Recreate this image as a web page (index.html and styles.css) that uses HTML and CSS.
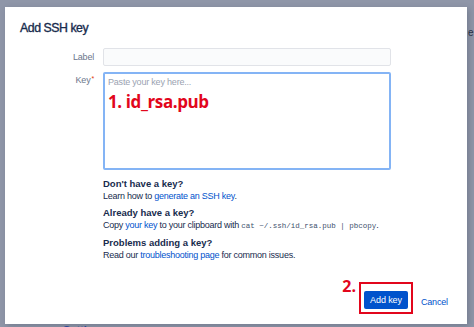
FILE: index.html
```html
<!DOCTYPE html>
<html lang="en">
  <head>
    <meta charset="UTF-8" />
    <title>Add SSH key</title>
    <link rel="stylesheet" href="styles.css">
  </head>
  <body>
    <div class="backdrop">
      <div class="modal">
        <h1>Add SSH key</h1>
        <form class="fields">
          <label class="lbl" for="label">Label</label>
          <input id="label" class="text" type="text" />
          <label class="lbl lbl-top" for="key">Key<span class="req">*</span></label>
          <div class="keybox">
            <span class="placeholder">Paste your key here...</span>
            <span class="note note-big">1. id_rsa.pub</span>
          </div>
        </form>
        <div class="help">
          <div class="group">
            <p class="q">Don't have a key?</p>
            <p>Learn how to <a href="#">generate an SSH key</a>.</p>
          </div>
          <div class="group">
            <p class="q">Already have a key?</p>
            <p>Copy <a href="#">your key</a> to your clipboard with <code>cat ~/.ssh/id_rsa.pub | pbcopy</code>.</p>
          </div>
          <div class="group">
            <p class="q">Problems adding a key?</p>
            <p>Read our <a href="#">troubleshooting page</a> for common issues.</p>
          </div>
        </div>
        <div class="footer">
          <span class="note note-step">2.</span>
          <div class="mark">
            <button class="primary">Add key</button>
          </div>
          <a class="cancel" href="#">Cancel</a>
        </div>
      </div>
      <div class="under">Settings</div>
      <span class="edge">e</span>
    </div>
  </body>
</html>
```

FILE: styles.css
```css
* {
  margin: 0;
  box-sizing: border-box;
}

body {
  margin: 0;
  padding: 0;
  width: 474px;
  height: 327px;
  overflow: hidden;
  background: #8f96a8;
  font-family: "Liberation Sans", Arial, sans-serif;
  color: #172b4d;
}

.backdrop {
  position: relative;
  padding: 7px 0 0 5px;
}

.modal {
  width: 462px;
  height: 317px;
  background: #fff;
  padding: 12px 20px 10px 15px;
  display: flex;
  flex-direction: column;
  box-shadow: 2px 2px 6px rgba(40, 50, 70, 0.25);
  position: relative;
  z-index: 1;
}

h1 {
  font-size: 12.3px;
  line-height: 18px;
  font-weight: 400;
  letter-spacing: -0.45px;
  color: #172b4d;
  margin-bottom: 11px;
  -webkit-text-stroke: 0.35px #172b4d;
}

.fields {
  display: grid;
  grid-template-columns: 75px 288px;
  column-gap: 8px;
  row-gap: 6px;
}

.lbl {
  font-size: 9px;
  letter-spacing: -0.2px;
  color: #6b778c;
  text-align: right;
  align-self: center;
  padding-right: 1px;
}

.lbl-top {
  align-self: start;
  padding-top: 3px;
}

.req {
  color: #de350b;
  font-size: 7px;
  vertical-align: top;
  margin-left: 1px;
}

.text {
  height: 18px;
  border: 1px solid #e1e3e8;
  border-radius: 2px;
  background: #fafbfc;
}

.keybox {
  height: 98px;
  border: 2px solid #84b4f5;
  border-radius: 2px;
  padding: 2px 3px;
  display: flex;
  flex-direction: column;
  align-items: flex-start;
}

.placeholder {
  font-size: 9px;
  letter-spacing: -0.2px;
  line-height: 12px;
  color: #9aa2b1;
}

.note {
  color: #e2061c;
  font-family: "Open Sans", sans-serif;
  font-weight: 700;
}

.note-big {
  font-size: 17px;
  line-height: 22px;
  margin-top: 3px;
  letter-spacing: -0.4px;
}

.help {
  margin: 7px 0 0 83px;
  display: flex;
  flex-direction: column;
  gap: 3px;
}

.help p {
  font-size: 9px;
  letter-spacing: -0.25px;
  line-height: 13px;
  color: #172b4d;
}

.help .q {
  font-size: 9.5px;
  font-weight: 700;
  letter-spacing: 0;
}

a {
  color: #0052cc;
  text-decoration: none;
}

code {
  font-family: "Liberation Mono", monospace;
  font-size: 7.5px;
  letter-spacing: 0;
  color: #42526e;
}

.footer {
  margin-top: auto;
  display: flex;
  justify-content: flex-end;
  align-items: flex-end;
}

.note-step {
  font-size: 16px;
  line-height: 16px;
  align-self: flex-start;
  margin: -4px 3px 0 0;
}

.mark {
  border: 2px solid #e2061c;
  padding: 7px 3px 3px 3px;
}

.primary {
  display: block;
  width: 44px;
  height: 18px;
  border: 0;
  border-radius: 2px;
  background: #0052cc;
  color: #fff;
  font-family: "Liberation Sans", Arial, sans-serif;
  font-size: 9px;
  letter-spacing: -0.1px;
  padding: 0;
}

.cancel {
  font-size: 9px;
  letter-spacing: -0.2px;
  margin: 0 0 7px 8px;
  width: 26px;
}

.under {
  margin-left: 58px;
  font-size: 11px;
  font-weight: 700;
  color: #2f4aa0;
  line-height: 12px;
  margin-top: 0;
}

.edge {
  position: absolute;
  top: 27px;
  left: 468px;
  font-size: 10px;
  color: #2a3145;
}
```
